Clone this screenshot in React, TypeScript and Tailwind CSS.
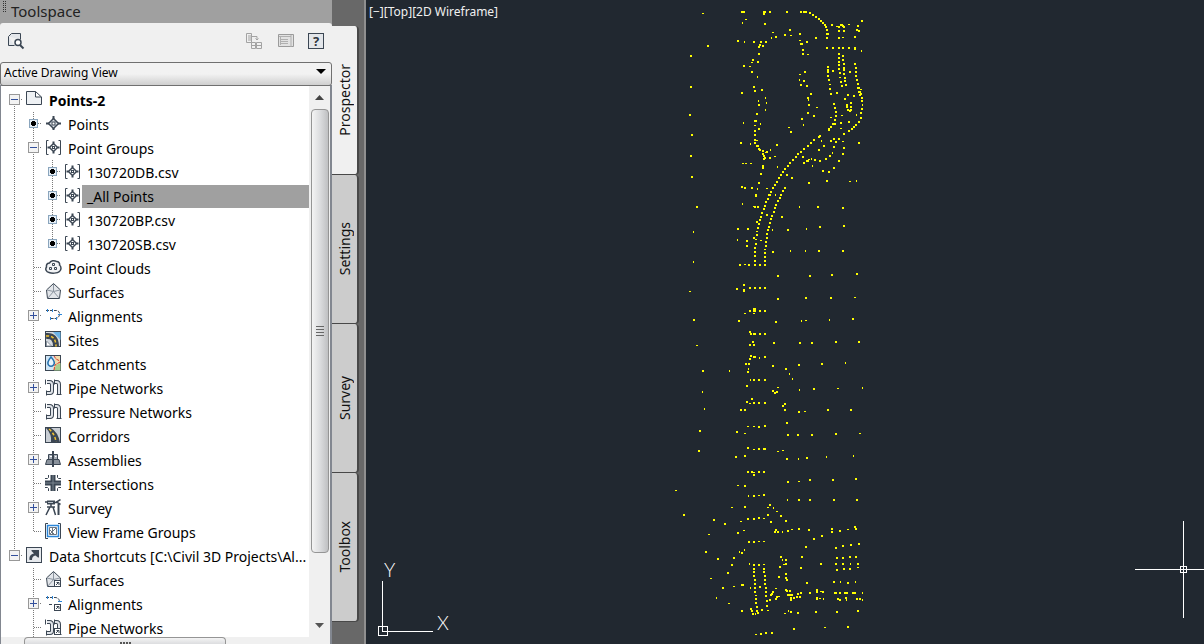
import { useState, type ReactNode } from "react";
import clsx from "clsx";

type Guide = "blank" | "line" | "tee" | "end" | "start";
type Toggle = "plus" | "minus" | "dot";

interface TreeRow {
  label: string;
  icon: keyof typeof icons;
  guides: Guide[];
  toggle?: Toggle;
  bold?: boolean;
}

const INK = "#3b4653";

const shortcutBadge = (
  <>
    <rect x="9.5" y="9.5" width="6" height="6" fill="#fff" stroke={INK} />
    <path d="M11 14l3-3M11.5 11.5h2.5v2.5" stroke={INK} />
  </>
);

const pipes = (
  <>
    <path d="M2 3h2.500q2.500 0 2.500 2.500V12q0 2-2 2H2" stroke={INK} strokeWidth="4" />
    <path d="M2 3h2.500q2.500 0 2.500 2.500V12q0 2-2 2H2" stroke="#dfe3e8" strokeWidth="2" />
    <path d="M10 3h1.500Q14 3 14 5.500V16" stroke={INK} strokeWidth="4" />
    <path d="M10 3h1.500Q14 3 14 5.500V15" stroke="#dfe3e8" strokeWidth="2" />
    <path d="M.5.5v5M1.500 11.500v5M9.500.5v5M11.500 15.500h5" stroke={INK} />
  </>
);

const surface = (
  <>
    <path d="M1.500 7L8.500.5l7 6.500-1 8.500h-12z" fill="#e3e6ea" stroke={INK} />
    <path d="M8.500 1v7.500M8.500 8.500L2 7M8.500 8.500l6.500-1.500M8.500 8.500l-6 7M8.500 8.500l6 7" stroke="#8c95a0" />
  </>
);

const icons = {
  drawing: (
    <path d="M.5.5h9l6 5.500v7.500H.5zM9.500.5V6h6" fill="#eef1f4" stroke={INK} />
  ),
  points: (
    <>
      <path d="M8.500 1v4M8.500 11v4M1 8.500h4M11 8.500h5" stroke={INK} strokeWidth="2" />
      <path d="M8.500 3.500l5 5-5 5-5-5z" fill="#dfe3e8" stroke={INK} strokeWidth="1.500" />
      <rect x="7" y="7" width="3" height="3" fill="#fff" stroke={INK} />
    </>
  ),
  group: (
    <>
      <path d="M3.500 1.500h-2v14h2M13.500 1.500h2v14h-2" stroke={INK} />
      <path d="M8.500 2.500v2M8.500 12.500v2M2.500 8.500h2M12.500 8.500h2" stroke={INK} strokeWidth="2" />
      <path d="M8.500 4.500l4 4-4 4-4-4z" fill="#fff" stroke={INK} strokeWidth="1.500" />
      <rect x="7.500" y="7.500" width="2" height="2" fill="#fff" stroke={INK} />
    </>
  ),
  cloud: (
    <>
      <path
        d="M4 13.500C1 13 0 10 1.500 8c-.5-3 1.500-4 3-4 1-2.500 5-3 7-1.500C14 2.500 15 4.500 14.500 6c2 1.500 2 5 0 6.500-2 2-8 2-10.500 1z"
        fill="#f2f3f5"
        stroke={INK}
        strokeWidth="1.500"
      />
      <path d="M7.500 4.500h2v2h-2zM4.500 8.500h2v2h-2zM9.500 8.500h2v2h-2z" stroke={INK} />
    </>
  ),
  surface,
  surfaceShortcut: (
    <>
      {surface}
      {shortcutBadge}
    </>
  ),
  alignment: (
    <>
      <path d="M1 3.500h10q3.500 0 3.500 3.500t-3.500 4.500H5" stroke={INK} strokeDasharray="3 1" />
      <path d="M2.500 2v3M7.500 2v3M13 7.500h4M11.500 10v3M5.500 10v3" stroke="#2b86d9" />
    </>
  ),
  alignmentShortcut: (
    <>
      <path d="M1 2.500h9q4 0 4.500 4M4 9.500h4" stroke={INK} strokeDasharray="3 1" />
      <path d="M2.500 1v3M7.500 1v3M13 6.500h4" stroke="#2b86d9" />
      {shortcutBadge}
    </>
  ),
  site: (
    <>
      <rect x=".5" y=".5" width="15" height="15" fill="#d3d8de" stroke={INK} />
      <path d="M8 1h7.500v8z" fill="#6bb4e8" />
      <path d="M1 5q10-1 10 10.500" stroke={INK} strokeWidth="6" />
      <path d="M1 5q10-1 10 10.500" stroke="#f2c230" strokeWidth="1.500" strokeDasharray="3 2" />
      <path d="M1.500 10l5 5h-5z" fill="#fff" stroke="#8c95a0" />
    </>
  ),
  catchment: (
    <>
      <rect x=".5" y=".5" width="15" height="15" fill="#f0dcae" stroke={INK} />
      <path d="M1 1h9L8 15H1z" fill="#cfe5f5" />
      <path d="M11 10l4.500-2v7.500H9z" fill="#a9cf8e" />
      <path d="M9 1l2 3 4 2M15 7l-5 3-1 5" stroke="#d8362c" strokeDasharray="3 1" />
      <path d="M6 2q5 5.500 2.500 8t-5 0Q1.500 7.500 6 2z" fill="#e8f4fc" stroke="#2671ae" strokeWidth="1.500" />
    </>
  ),
  pipes,
  pipesShortcut: (
    <>
      {pipes}
      {shortcutBadge}
    </>
  ),
  corridor: (
    <>
      <rect x=".5" y=".5" width="15" height="15" fill="#c9ced4" stroke={INK} />
      <path d="M1 1h5q7 4 9 14.500H6Q7 7 1 1z" fill={INK} />
      <path d="M4 2q6 5 7 13" stroke="#f2c230" strokeWidth="1.500" strokeDasharray="3 2" />
    </>
  ),
  assembly: (
    <>
      <path d="M3.500 3.500h9v5h-9z" fill="#a8afb8" stroke={INK} />
      <path d="M2 8.500h12l1.500 5H.5z" fill="#8a929c" stroke={INK} />
      <path d="M8 0v16" stroke={INK} strokeWidth="2" />
      <path d="M5 5.500h2M10 5.500h1.500" stroke="#fff" />
    </>
  ),
  intersection: (
    <>
      <path d="M8 0v16M0 8h16" stroke={INK} strokeWidth="5" />
      <path d="M8 0v16M0 8h16" stroke="#7b8590" strokeWidth="1" />
      <path d="M3.500 0v2.500l-1 1H0M12.500 0v2.500l1 1H16M3.500 16v-2.500l-1-1H0M12.500 16v-2.500l1-1H16" stroke={INK} />
    </>
  ),
  survey: (
    <>
      <path d="M2 1.500h8v4H2z" fill={INK} />
      <path d="M0 3h2M10 3.500h3M15.500.5l-4 2.500 4 2.500M6 5v3M2 8h8M5 8l-4 8M8 8l2.500 8" stroke={INK} strokeWidth="1.500" />
      <path d="M3 3.500h5" stroke="#bdc5cd" />
      <path d="M13.500 5v11" stroke={INK} strokeWidth="2" />
    </>
  ),
  viewFrame: (
    <>
      <path d="M3 .5H.5v15H3M13 .5h2.500v15H13" stroke={INK} />
      <rect x="2.500" y="2.500" width="11" height="11" fill="#fff" stroke="#2b86d9" strokeWidth="1.500" />
      <path d="M4.500 4.500h7v7h-7zM5 11l6-6M5 7l4 4M7.500 5v6" stroke="#6d7681" />
    </>
  ),
  shortcut: (
    <>
      <rect x=".5" y=".5" width="15" height="15" fill="#e6e9ed" stroke={INK} />
      <path d="M3.500 13C3 9 5 7 8 6.500L5.500 4V3H13v7.500h-1L9.500 8.500C7 9 6 10.500 6 13z" fill={INK} />
    </>
  ),
};

const rows: TreeRow[] = [
  { label: "Points-2", icon: "drawing", guides: ["start"], toggle: "minus", bold: true },
  { label: "Points", icon: "points", guides: ["line", "tee"], toggle: "dot" },
  { label: "Point Groups", icon: "group", guides: ["line", "tee"], toggle: "minus" },
  { label: "130720DB.csv", icon: "group", guides: ["line", "line", "tee"], toggle: "dot" },
  { label: "_All Points", icon: "group", guides: ["line", "line", "tee"], toggle: "dot" },
  { label: "130720BP.csv", icon: "group", guides: ["line", "line", "tee"], toggle: "dot" },
  { label: "130720SB.csv", icon: "group", guides: ["line", "line", "end"], toggle: "dot" },
  { label: "Point Clouds", icon: "cloud", guides: ["line", "tee"] },
  { label: "Surfaces", icon: "surface", guides: ["line", "tee"] },
  { label: "Alignments", icon: "alignment", guides: ["line", "tee"], toggle: "plus" },
  { label: "Sites", icon: "site", guides: ["line", "tee"] },
  { label: "Catchments", icon: "catchment", guides: ["line", "tee"] },
  { label: "Pipe Networks", icon: "pipes", guides: ["line", "tee"], toggle: "plus" },
  { label: "Pressure Networks", icon: "pipes", guides: ["line", "tee"] },
  { label: "Corridors", icon: "corridor", guides: ["line", "tee"] },
  { label: "Assemblies", icon: "assembly", guides: ["line", "tee"], toggle: "plus" },
  { label: "Intersections", icon: "intersection", guides: ["line", "tee"] },
  { label: "Survey", icon: "survey", guides: ["line", "tee"], toggle: "plus" },
  { label: "View Frame Groups", icon: "viewFrame", guides: ["line", "end"] },
  { label: "Data Shortcuts [C:\\Civil 3D Projects\\Al...", icon: "shortcut", guides: ["end"], toggle: "minus" },
  { label: "Surfaces", icon: "surfaceShortcut", guides: ["blank", "tee"] },
  { label: "Alignments", icon: "alignmentShortcut", guides: ["blank", "tee"], toggle: "plus" },
  { label: "Pipe Networks", icon: "pipesShortcut", guides: ["blank", "tee"] },
];

const tabs = ["Prospector", "Settings", "Survey", "Toolbox"];

// Survey points as "x,y" pairs, by marker shape
const squares = `
72,12 74,12 94,12 95,12 94,14 100,12 117,12 131,12 134,12 136,12 140,13 143,15 146,17 149,19 151,21 153,23 155,25 156,27
157,30 157,34 158,34 157,38 162,25 171,25 172,25 173,26 174,27 169,27 169,31 174,31 169,38 192,21 188,26 187,30 189,31 185,37
157,48 163,48 169,48 173,48 179,48 185,48 185,49 95,24 68,41 38,46 21,56 84,42 91,42 96,42 90,45 93,46 89,47 89,54 106,37
115,35 120,30 130,34 146,38 137,42 131,44 132,44 133,50 133,54 83,60 88,62 74,66 82,72 84,87 21,87 85,91 92,90 72,93
89,105 87,114 85,121 86,121 89,129 20,115 135,72 134,81 131,85 137,86 141,94 138,98 139,105 138,113 144,116 132,119
169,54 169,58 169,62 169,65 169,69 170,73 171,82 172,86 173,56 173,60 174,64 174,68 174,70 174,74 175,78 175,81 176,85
158,67 158,70 158,72 158,76 159,80 160,89 161,94 163,71 180,72 185,64 186,68 186,72 186,76 187,80 188,84 188,88 189,88
189,92 190,92 191,94 190,95 192,98 192,101 192,109 191,113 191,118 189,122 186,125 184,127 182,129 167,93 178,95 184,96
175,99 177,105 177,107 181,103 181,107 180,111 181,110 178,110 164,104 165,108 166,112 166,116 165,120 165,124 163,124
161,127 159,129 171,123 179,122
22,135 85,131 85,135 85,140 85,143 71,143 87,146 88,146 89,149 90,150 93,151 93,154 94,156 94,159 95,158 97,152 100,158
107,145 121,132 21,156 22,177 93,166 93,168 91,174 89,183 72,187 75,188 82,188 86,195 86,196 27,207 85,207 88,207
150,136 149,137 144,140 141,143 138,146 134,149 131,152 128,154 126,157 123,160 120,163 118,166 115,169 113,172 111,175
109,178 107,182 105,185 103,188 101,192 100,195 99,195 98,199 96,202 95,206 94,209 92,213 91,217 90,220 87,222 89,224
88,228 87,235 84,238 86,244 85,248 85,252 85,256 115,188 113,191 111,195 110,198 108,201 106,205 105,208 104,212 102,216
101,219 100,223 99,227 98,230 97,234 97,238 96,242 96,246 95,253 95,257 117,175 122,178 112,217 97,215 118,230 103,252
68,229 78,229 77,241 77,246 133,157 134,163 137,161 145,160 150,161 139,183 149,150 154,146 156,159 160,156 164,147
161,141 164,139 166,142 169,139 174,134 179,131 159,130 174,148 173,154 169,161 164,168 159,172 153,171 157,181 189,143
148,207 173,208 174,226 150,227 149,251 173,251
85,261 95,261 70,265 79,265 85,265 90,265 95,265 108,276 140,276 162,275 187,274 74,285 67,289 74,290 74,291 80,288
85,288 90,288 95,288 108,299 136,298 161,298 80,311 84,309 85,309 84,311 85,311 90,311 95,311 24,320 69,321 106,322
183,319 80,332 81,334 84,334 85,334 90,334 95,334 83,342 80,345 84,345 104,343 130,343 142,343 166,342 189,342 81,356
80,359 84,357 85,357 95,357 76,364 79,364 78,372 33,371 103,366 116,369 129,365 152,364 84,380 89,380 95,380 77,386 144,389
103,391 105,393 107,392 82,399 77,402 84,403 89,403 95,403 71,410 75,410 113,406 115,404 115,410 129,412 158,410 181,410
117,423 89,427 95,426 30,431 67,432 118,435 128,435 142,435 166,434 78,448 89,449 94,449 95,449 29,451 66,457 75,456
117,459 137,458 78,472 82,472 84,475 89,472 94,472 118,482 140,480 163,480 186,479 75,486 84,496 94,495 129,500 140,500
164,500 187,500 75,507 100,505 98,515 111,516 14,515 78,519 84,519 89,518
44,520 55,524 101,522 116,521 68,533 106,530 105,532 108,532 118,531 129,529 139,530 162,529 162,532 170,531 185,527
186,529 152,536 144,539 136,547 79,542 84,542 166,548 173,546 181,545 189,544 36,552 72,553 48,559 64,558 111,557
132,557 167,558 173,558 180,557 186,557 116,560 116,564 62,565 84,565 89,565 110,567 131,568 151,564 166,564 173,564
188,564 167,570 174,569 180,569 58,573 84,569 84,572 84,576 85,580 85,584 85,588 85,592 86,599 86,603 87,607 87,611
88,613 94,569 94,572 95,576 95,580 95,584 96,588 96,592 96,596 97,601 97,606 109,577 116,574 116,578 117,580 137,583
72,585 73,585 90,587 53,588 116,590 117,591 120,591 103,592 101,595 102,594 107,597 106,599 100,600 118,595 120,595
122,595 121,598 121,600 124,598 127,597 128,594 130,597 131,593 140,593 147,590 147,592 153,592 147,598 147,599
164,582 178,583 165,593 166,593 170,593 175,593 177,593 183,593 185,593 168,599 170,600 176,598 187,599 190,599
72,611 81,609 82,611 83,614 92,610 121,612 128,613 146,612 167,612 188,611 124,629 178,627 91,634 96,633 102,633`;

const dashes = `
33,13 76,19 103,32 121,35 167,26 179,24 173,37 130,40 138,54 82,62 80,66 130,74 147,107 119,127 161,117 172,115 85,125
160,84 191,89 170,77 171,128 73,163 76,163 81,163 105,156 97,188 173,141 180,181 139,159 84,206 91,240 86,239 87,231
95,249 96,152 87,140 20,291 75,264 75,313 84,313 27,345 136,320 185,297 108,387 168,388 80,403 135,411 78,426 84,426
75,433 190,433 84,449 113,450 108,451 84,472 129,481 68,485 6,490 89,495 62,507 98,507 107,511 44,519 94,518 39,534
71,521 74,530 94,518 122,529 178,529 89,541 94,541 94,564 41,578 64,586 59,603 106,588 109,596 115,613 98,610 155,627
86,634 188,567 114,564 151,591 150,598 86,595`;

const ticks = `
72,23 74,42 101,38 191,51 87,77 129,80 95,98 96,103 95,110 88,101 90,124 73,123 133,125 186,115 192,105 138,100 80,144
100,150 107,167 105,195 72,204 129,207 136,229 120,251 135,251 151,141 162,153 141,159 142,166 186,181 23,232 67,240
138,161 87,189 102,230 23,262 131,321 159,320 89,358 59,371 119,374 122,379 175,363 192,388 80,380 129,390 78,369
32,392 34,409 128,459 156,457 183,456 117,500 103,508 78,496 69,552 79,564 80,588 46,598 112,532 112,560 180,564
170,582 185,582 192,593 192,600 153,599 118,611 176,600 74,550 85,614`;

function toPath(points: string, w: number, h: number) {
  return points
    .trim()
    .split(/\s+/)
    .map((pair) => {
      const [x, y] = pair.split(",").map(Number);
      return `M${x - (w - 1)} ${y - (h - 1)}h${w}v${h}h-${w}z`;
    })
    .join("");
}

function GuideCell({ guide, toggle, last }: { guide: Guide; toggle?: Toggle; last: boolean }) {
  const from = guide === "start" ? 12 : 0;
  const to = guide === "end" ? 12 : 24;

  return (
    <svg width="19" height="24" fill="none" shapeRendering="crispEdges" className="shrink-0">
      <g stroke="#7a7a7a" strokeDasharray="1 1">
        {guide !== "blank" && <path d={`M9.5 ${from}V${to}`} />}
        {guide !== "blank" && guide !== "line" && last && <path d="M10 11.5h8" />}
      </g>
      {toggle === "dot" && (
        <>
          <rect x="5.5" y="7.5" width="8" height="8" fill="#e4edf5" stroke="#8aa5bd" />
          <path d="M8 9h3v1h1v3h-1v1H8v-1H7v-3h1z" fill="#000" />
        </>
      )}
      {(toggle === "plus" || toggle === "minus") && (
        <>
          <rect x="4.5" y="6.5" width="10" height="10" fill="#f3f3f3" stroke="#989898" />
          <path d={toggle === "plus" ? "M6 11.5h7M9.5 8v7" : "M6 11.5h7"} stroke="#33509c" />
        </>
      )}
    </svg>
  );
}

function ToolButton({ label, children }: { label: string; children: ReactNode }) {
  return (
    <button type="button" aria-label={label} className="flex h-5 w-5 items-center justify-center">
      <svg width="18" height="18" fill="none">
        {children}
      </svg>
    </button>
  );
}

function Toolbar() {
  return (
    <div className="flex h-9 shrink-0 items-center pr-2 pl-1.5">
      <ToolButton label="Preview">
        <path d="M1.500 4.500l3-3h9v6M1.500 4.500v9h6" fill="#e3e6ea" stroke={INK} />
        <circle cx="11" cy="10.500" r="3" fill="#fff" stroke={INK} strokeWidth="1.500" />
        <path d="M13 13l3.500 3.500" stroke={INK} strokeWidth="2" />
      </ToolButton>
      <div className="ml-auto flex items-center gap-3">
        <ToolButton label="Panorama items">
          <path d="M1.500 1.500h5v9h-5zM3 4h3M3 6h3M3 8h3M7 4.500h5V8M10.500 6.500L12 8l1.500-1.500M6.500 10.500h4v6h-4zM11.500 10.500h5v6h-5zM7 13.500h9" stroke="#a3a3a3" />
        </ToolButton>
        <ToolButton label="Panorama">
          <path d="M1.500 2.500h15v12h-15z" fill="#e2e2e2" stroke="#9b9b9b" />
          <path d="M2 4.500h12M4 7.500h7M4 9.500h7M4 11.500h7M3.500 5v8M14 3v12" stroke="#b0b0b0" />
        </ToolButton>
        <button
          type="button"
          aria-label="Help"
          className="flex h-4 w-4 items-center justify-center border border-[#3b4653] bg-[#e3e6ea] font-['Noto_Sans',sans-serif] text-[13px] leading-none font-bold text-[#2f3640]"
        >
          ?
        </button>
      </div>
    </div>
  );
}

function Tree() {
  const [selected, setSelected] = useState(4);

  return (
    <ul role="tree" className="min-w-0 flex-1 overflow-hidden pt-0.5 pl-1">
      {rows.map((row, i) => (
        <li
          key={i}
          role="treeitem"
          aria-selected={i === selected}
          onClick={() => setSelected(i)}
          className="flex h-6 items-center text-[14px] leading-6 whitespace-nowrap text-black"
        >
          {row.guides.map((guide, level) => {
            const last = level === row.guides.length - 1;
            return <GuideCell key={level} guide={guide} toggle={last ? row.toggle : undefined} last={last} />;
          })}
          <svg width="18" height="18" fill="none" className="ml-0.5 shrink-0">
            {icons[row.icon]}
          </svg>
          <span
            className={clsx(
              "h-[23px] flex-1 truncate pl-[5px]",
              i === selected && "bg-[#a0a0a0]",
              row.bold && "font-bold"
            )}
          >
            {row.label}
          </span>
        </li>
      ))}
    </ul>
  );
}

function Toolspace() {
  return (
    <aside className="flex w-[332px] shrink-0 flex-col bg-[#a0a0a0]">
      <header className="flex h-[23px] shrink-0 items-center gap-1 pl-0.5">
        <svg width="5" height="14" fill="#333" shapeRendering="crispEdges" className="self-start">
          <path d="M1 1h1v1h-1zM1 3h1v1h-1zM1 5h1v1h-1zM1 7h1v1h-1zM1 9h1v1h-1zM1 11h1v1h-1zM3 1h1v1h-1zM3 3h1v1h-1zM3 5h1v1h-1zM3 7h1v1h-1zM3 9h1v1h-1zM3 11h1v1h-1z" />
        </svg>
        <h1 className="text-[15px] text-[#222]">Toolspace</h1>
      </header>

      <div className="flex min-h-0 flex-1 flex-col rounded-t-[3px] bg-[#f0f0f0]">
        <Toolbar />
        <div className="relative h-6 shrink-0">
          <select
            aria-label="View"
            className="h-full w-full appearance-none rounded-[3px] border border-[#707070] bg-linear-to-b from-[#f2f2f2] from-50% to-[#cfcfcf] pb-0.5 pl-[3px] text-[12px] text-black"
          >
            <option>Active Drawing View</option>
            <option>Master View</option>
          </select>
          <svg width="10" height="6" className="pointer-events-none absolute top-2.5 right-1.5">
            <path d="M0 0h10L5 5z" />
          </svg>
        </div>

        <div className="mt-0.5 flex min-h-0 flex-1 flex-col border border-r-2 border-b-0 border-[#828790] bg-white">
          <div className="flex min-h-0 flex-1">
            <Tree />
            <div className="flex w-[21px] shrink-0 flex-col items-center bg-[#f0f0f0]">
              <svg width="9" height="23" className="shrink-0">
                <path d="M0 14h9L4.500 9z" fill="#444" />
              </svg>
              <div className="flex w-[18px] flex-[443] flex-col items-center justify-center gap-0.5 rounded-sm border border-[#959595] bg-linear-to-r from-[#f4f4f4] via-[#dcdddf] to-[#bfc0c2]">
                <i className="h-px w-2 bg-[#666]" />
                <i className="h-px w-2 bg-[#666]" />
                <i className="h-px w-2 bg-[#666]" />
                <i className="h-px w-2 bg-[#666]" />
              </div>
              <div className="flex-[62]" />
              <svg width="9" height="22" className="shrink-0">
                <path d="M0 8h9l-4.500 5z" fill="#555" />
              </svg>
            </div>
          </div>
          <div className="flex h-[7px] shrink-0 items-start bg-[#f0f0f0] pl-[23px]">
            <div className="flex h-full w-[202px] items-center justify-center gap-px rounded-t-sm border border-b-0 border-[#959595] bg-linear-to-b from-[#f4f4f4] to-[#dcdddf] pt-1">
              <i className="h-0.5 w-0.5 bg-[#555]" />
              <i className="h-0.5 w-0.5 bg-[#555]" />
              <i className="h-0.5 w-0.5 bg-[#555]" />
              <i className="h-0.5 w-0.5 bg-[#555]" />
            </div>
          </div>
        </div>
      </div>
    </aside>
  );
}

function SideTabs() {
  const [active, setActive] = useState("Prospector");

  return (
    <div role="tablist" className="flex w-[34px] shrink-0 flex-col border-r-2 border-[#8f8f8f] bg-[#686868] pt-[26px]">
      {tabs.map((tab) => (
        <button
          key={tab}
          type="button"
          role="tab"
          aria-selected={tab === active}
          onClick={() => setActive(tab)}
          className={clsx(
            "flex h-[149px] w-[27px] items-center justify-center rounded-r-[4px] border-r-2 border-b border-[#484848] text-[14px] text-[#111]",
            tab === active ? "bg-[#f0f0f0]" : "bg-[#cccccc]"
          )}
        >
          <span className="rotate-180 [writing-mode:vertical-rl]">{tab}</span>
        </button>
      ))}
    </div>
  );
}

function Viewport() {
  return (
    <main className="relative min-w-0 flex-1 overflow-hidden bg-[#212830]">
      <p className="px-[3px] py-1 text-[12px] leading-4 text-[#f0f0f0]">[−][Top][2D Wireframe]</p>

      <svg className="absolute inset-0 h-full w-full" fill="none" shapeRendering="crispEdges">
        <g transform="translate(304 0)" fill="#ffff00">
          <path d={toPath(squares, 2, 2)} />
          <path d={toPath(dashes, 2, 1)} />
          <path d={toPath(ticks, 1, 2)} />
        </g>

        {/* UCS icon */}
        <path d="M16.5 581v50.500H67M12.500 626.500h9v9h-9z" stroke="#fff" />
        <g fill="#fff" className="font-['Lato',sans-serif] text-[19px] font-light">
          <text x="18" y="577">Y</text>
          <text x="71" y="630">X</text>
        </g>

        {/* Crosshair */}
        <path d="M769 569.500h69M817.500 521v97M814.500 566.500h6v6h-6z" stroke="#fff" />
      </svg>
    </main>
  );
}

export default function App() {
  return (
    <div className="flex h-screen overflow-hidden font-['Noto_Sans','Open_Sans',sans-serif]">
      <Toolspace />
      <SideTabs />
      <Viewport />
    </div>
  );
}
